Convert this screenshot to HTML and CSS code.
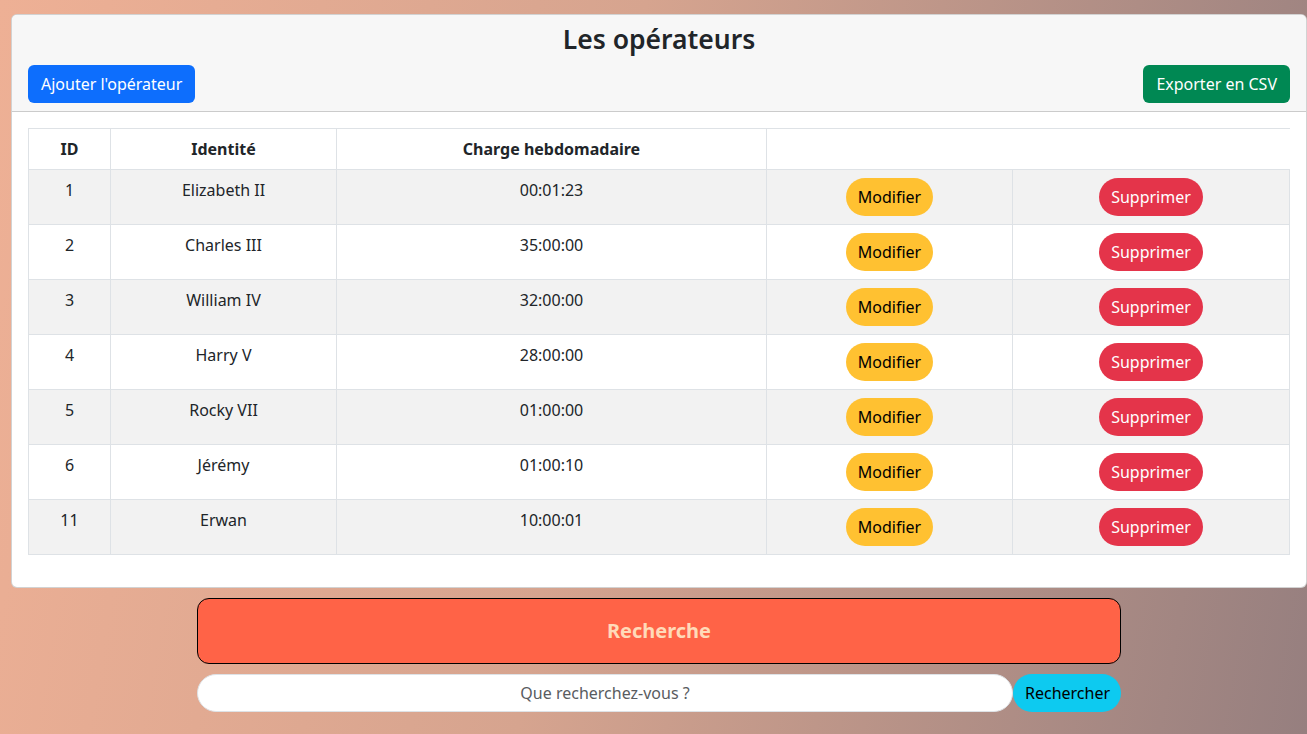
FILE: index.html
```html
<!DOCTYPE html>
<html lang="fr">
<head>
  <meta charset="UTF-8">
  <meta name="viewport" content="width=device-width, initial-scale=1.0">
  <title>Les opérateurs</title>
  <link rel="stylesheet" href="styles.css">
</head>
<body>

  <div class="page">
    <div class="card">
      <div class="card-header">
        <h3 class="title">Les opérateurs</h3>
        <div class="header-actions">
          <button class="btn btn-primary">Ajouter l'opérateur</button>
          <button class="btn btn-success">Exporter en CSV</button>
        </div>
      </div>

      <div class="card-body">
        <table class="table">
          <colgroup>
            <col class="col-id">
            <col class="col-name">
            <col class="col-charge">
            <col class="col-edit">
            <col>
          </colgroup>
          <thead>
            <tr>
              <th>ID</th>
              <th>Identité</th>
              <th>Charge hebdomadaire</th>
              <th class="col-actions" colspan="2"></th>
            </tr>
          </thead>
          <tbody id="operators"></tbody>
        </table>
      </div>
    </div>

    <div class="search">
      <div class="search-title">Recherche</div>
      <div class="search-bar">
        <input class="search-input" type="text" placeholder="Que recherchez-vous ?">
        <button class="btn-search">Rechercher</button>
      </div>
    </div>
  </div>

  <script>
    const operators = [
      { id: 1, name: "Elizabeth II", charge: "00:01:23" },
      { id: 2, name: "Charles III", charge: "35:00:00" },
      { id: 3, name: "William IV", charge: "32:00:00" },
      { id: 4, name: "Harry V", charge: "28:00:00" },
      { id: 5, name: "Rocky VII", charge: "01:00:00" },
      { id: 6, name: "Jérémy", charge: "01:00:10" },
      { id: 11, name: "Erwan", charge: "10:00:01" },
    ];

    const tbody = document.getElementById("operators");

    operators.forEach(op => {
      const tr = document.createElement("tr");
      tr.innerHTML = `
        <td>${op.id}</td>
        <td>${op.name}</td>
        <td>${op.charge}</td>
        <td><button class="pill pill-warning">Modifier</button></td>
        <td><button class="pill pill-danger">Supprimer</button></td>
      `;
      tbody.appendChild(tr);
    });
  </script>

</body>
</html>
```

FILE: styles.css
```css
* {
  box-sizing: border-box;
}

body {
  margin: 0;
  min-height: 734px;
  font-family: "Noto Sans", Arial, sans-serif;
  font-size: 16px;
  line-height: 1.5;
  color: #212529;
  background: linear-gradient(100deg, #eeb095 0%, #d6a48f 45%, #967f7f 100%);
}

.page {
  margin: 0 0 0 11px;
  padding-top: 14px;
}

.card {
  background: white;
  border: 1px solid rgba(0, 0, 0, 0.175);
  border-radius: 6px;
  overflow: hidden;
}

.card-header {
  background-color: #f7f7f7;
  border-bottom: 1px solid rgba(0, 0, 0, 0.175);
  padding: 8px 16px;
}

.title {
  margin: 0 0 8px;
  text-align: center;
  font-size: 26.5px;
  font-weight: 600;
  line-height: 33.5px;
}

.header-actions {
  display: flex;
  justify-content: space-between;
}

.btn {
  padding: 6px 12px;
  font-family: inherit;
  font-size: 16px;
  line-height: 24px;
  color: white;
  border: 1px solid transparent;
  border-radius: 6px;
  cursor: pointer;
}

.btn-primary {
  background-color: #0d6efd;
}

.btn-success {
  background-color: #008853;
}

.card-body {
  padding: 16px;
}

.table {
  width: 100%;
  margin-bottom: 16px;
  border-collapse: collapse;
  table-layout: fixed;
}

.table th,
.table td {
  padding: 8px;
  border: 1px solid #dee2e6;
  text-align: center;
  vertical-align: top;
}

.table th {
  font-weight: 700;
}

.table th.col-actions {
  border-right: none;
}

.table tbody tr:nth-child(odd) td {
  background-color: #f2f2f2;
}

.col-id {
  width: 82px;
}

.col-name {
  width: 226px;
}

.col-charge {
  width: 430px;
}

.col-edit {
  width: 246px;
}

.pill {
  padding: 6px 11px;
  font-family: inherit;
  font-size: 16px;
  line-height: 24px;
  border: 1px solid transparent;
  border-radius: 50rem;
  cursor: pointer;
}

.pill-warning {
  background-color: #ffc131;
  color: black;
}

.pill-danger {
  background-color: #e4344a;
  color: white;
}

.search {
  width: 924px;
  margin: 10px auto 0;
}

.search-title {
  padding: 16px;
  line-height: 32px;
  text-align: center;
  font-size: 20px;
  font-weight: 700;
  color: #ffdab9;
  background-color: tomato;
  border: 1px solid black;
  border-radius: 12px;
}

.search-bar {
  display: flex;
  margin-top: 10px;
}

.search-input {
  flex: 1;
  height: 38px;
  padding: 6px 12px;
  font-family: inherit;
  font-size: 16px;
  text-align: center;
  border: 1px solid #dee2e6;
  border-radius: 50rem;
  background: white;
}

.search-input::placeholder {
  color: #595c5f;
}

.btn-search {
  width: 108px;
  height: 38px;
  padding: 6px 12px;
  font-family: inherit;
  font-size: 16px;
  color: black;
  background-color: #0dcaf0;
  border: none;
  border-radius: 50rem;
  cursor: pointer;
}
```
